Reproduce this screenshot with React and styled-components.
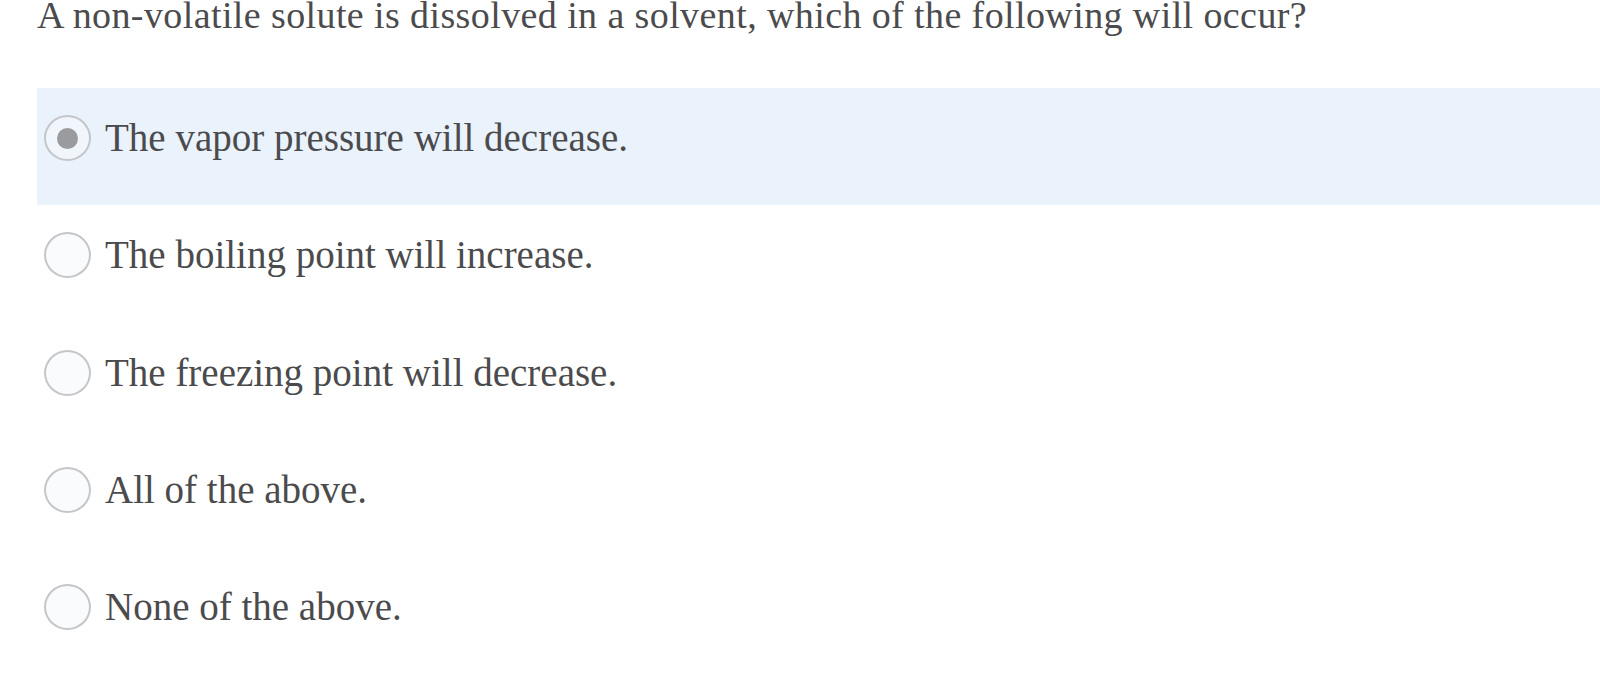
import styled, { createGlobalStyle } from "styled-components"

const Global = createGlobalStyle`
    html, body {
        margin: 0;
        padding: 0;
        background: #ffffff;
    }
    body {
        font-family: "Liberation Serif", "Times New Roman", serif;
        color: #4b4b4d;
    }
`

const Page = styled.div`
    padding-left: 37px;
`
const Question = styled.div`
    font-size: 38px;
    line-height: 40px;
    letter-spacing: 0.4px;
    margin-top: -5px;
    height: 93px;
    white-space: nowrap;
`
const List = styled.div`
    display: flex;
    flex-direction: column;
`
const Option = styled.label`
    display: flex;
    align-items: flex-start;
    gap: 14px;
    height: 117.25px;
    flex-shrink: 0;
    box-sizing: border-box;
    padding: 27px 0 0 7px;
    background: ${(props) => (props.selected ? "#eaf2fc" : "transparent")};
    cursor: pointer;
`
const Radio = styled.span`
    width: 47px;
    height: 46px;
    box-sizing: border-box;
    border-radius: 50%;
    border: 2px solid #c4c6c9;
    background: ${(props) => (props.selected ? "#f1f6fd" : "#fafbfd")};
    display: flex;
    align-items: center;
    justify-content: center;
    flex-shrink: 0;
`
const Dot = styled.span`
    width: 21px;
    height: 21px;
    border-radius: 50%;
    background: #9a9b9e;
`
const OptText = styled.span`
    font-size: 39px;
    line-height: 46px;
`

const options = [
    "The vapor pressure will decrease.",
    "The boiling point will increase.",
    "The freezing point will decrease.",
    "All of the above.",
    "None of the above.",
]

function App() {
    const selected = 0
    return (
        <>
            <Global />
            <Page>
                <Question>A non-volatile solute is dissolved in a solvent, which of the following will occur?</Question>
                <List>
                    {options.map((o, i) => (
                        <Option key={o} selected={i === selected}>
                            <Radio selected={i === selected}>{i === selected && <Dot />}</Radio>
                            <OptText>{o}</OptText>
                        </Option>
                    ))}
                </List>
            </Page>
        </>
    )
}

export default App
